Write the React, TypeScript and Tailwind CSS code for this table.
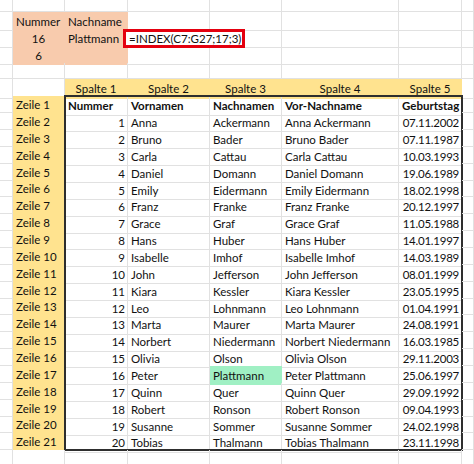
import React from 'react';

/** One Excel-style cell: its text, alignment, weight and fill. */
interface Cell {
  t?: string;
  a?: 'l' | 'r' | 'c';
  b?: boolean;
  f?: 'o' | 'y' | 'g';
  n?: boolean;
}

const PEOPLE: [string, string, string][] = [
  ['Anna', 'Ackermann', '07.11.2002'],
  ['Bruno', 'Bader', '07.11.1987'],
  ['Carla', 'Cattau', '10.03.1993'],
  ['Daniel', 'Domann', '19.06.1989'],
  ['Emily', 'Eidermann', '18.02.1998'],
  ['Franz', 'Franke', '20.12.1997'],
  ['Grace', 'Graf', '11.05.1988'],
  ['Hans', 'Huber', '14.01.1997'],
  ['Isabelle', 'Imhof', '14.03.1989'],
  ['John', 'Jefferson', '08.01.1999'],
  ['Kiara', 'Kessler', '23.05.1995'],
  ['Leo', 'Lohnmann', '01.04.1991'],
  ['Marta', 'Maurer', '24.08.1991'],
  ['Norbert', 'Niedermann', '16.03.1985'],
  ['Olivia', 'Olson', '29.11.2003'],
  ['Peter', 'Plattmann', '25.06.1997'],
  ['Quinn', 'Quer', '29.09.1992'],
  ['Robert', 'Ronson', '09.04.1993'],
  ['Susanne', 'Sommer', '24.02.1998'],
  ['Tobias', 'Thalmann', '23.11.1998'],
];

const FILL: Record<string, string> = {
  o: 'bg-[#f8cbad] border-[#f8cbad]',
  y: 'bg-[#ffe38f] border-[#ffe38f]',
  g: 'bg-[#a0f0c4] border-[#a0f0c4]',
};

const ALIGN: Record<string, string> = {
  l: 'justify-start pl-[3px]',
  r: 'justify-end pr-[2px]',
  c: 'justify-center',
};

const COLS = 'grid grid-cols-[13px_52px_63px_82px_72px_117px_63px_1fr]';

function SheetCell({ cell, className = '' }: { cell: Cell; className?: string }) {
  const fill = cell.f ? FILL[cell.f] : 'border-[#e1e1e1]';
  return (
    <div
      className={`flex min-w-0 items-center overflow-visible whitespace-nowrap border-r border-b pt-px ${fill} ${
        ALIGN[cell.a ?? 'l']
      } ${cell.b ? 'font-bold' : ''} ${cell.n ? 'tracking-[-0.25px]' : ''} ${className}`}
    >
      {cell.t}
    </div>
  );
}

function SheetRow({ cells, h = 'h-[16.87px]' }: { cells: Cell[]; h?: string }) {
  return (
    <div className={`${COLS} ${h}`}>
      {cells.map((c, i) => (
        <SheetCell key={i} cell={c} />
      ))}
    </div>
  );
}

const blank = (n: number): Cell[] => Array.from({ length: n }, () => ({}));

export default function App() {
  const header: Cell[] = [
    { t: 'Nummer', b: true },
    { t: 'Vornamen', b: true },
    { t: 'Nachnamen', b: true },
    { t: 'Vor-Nachname', b: true },
    { t: 'Geburtstag', b: true },
  ];

  const body: Cell[][] = [
    header,
    ...PEOPLE.map(([first, last, born], i): Cell[] => [
      { t: String(i + 1), a: 'r' },
      { t: first },
      { t: last, f: last === 'Plattmann' ? 'g' : undefined },
      { t: `${first} ${last}` },
      { t: born, a: 'r', n: true },
    ]),
  ];

  return (
    <div className="h-[464px] w-[474px] overflow-hidden bg-white font-['Lato',sans-serif] text-[11.5px] text-[#111]">
      <SheetRow cells={blank(8)} h="h-[12px]" />
      <SheetRow
        cells={[{}, { t: 'Nummer', f: 'o' }, { t: 'Nachname', f: 'o' }, {}, {}, {}, {}, {}]}
      />

      {/* row with the formula, framed in red */}
      <div className={`${COLS} relative z-10 h-[16.87px]`}>
        <SheetCell cell={{}} />
        <SheetCell cell={{ t: '16', f: 'o', a: 'c' }} />
        <SheetCell cell={{ t: 'Plattmann', f: 'o' }} />
        <div className="relative border-b border-[#e1e1e1]">
          <div className="absolute top-0 -left-[5px] z-10 flex h-[19px] w-[122px] items-center border-[3px] border-[#e4000f] bg-white pt-px pl-[3px] whitespace-nowrap">
            =INDEX(C7:G27;17;3)
          </div>
        </div>
        <SheetCell cell={{}} />
        <SheetCell cell={{}} />
        <SheetCell cell={{}} />
        <SheetCell cell={{}} />
      </div>

      <SheetRow cells={[{}, { t: '6', f: 'o', a: 'c' }, { f: 'o' }, {}, {}, {}, {}, {}]} />
      <SheetRow cells={blank(8)} />
      <SheetRow
        cells={[
          {},
          {},
          { t: 'Spalte 1', f: 'y', a: 'c' },
          { t: 'Spalte 2', f: 'y', a: 'c' },
          { t: 'Spalte 3', f: 'y', a: 'c' },
          { t: 'Spalte 4', f: 'y', a: 'c' },
          { t: 'Spalte 5', f: 'y', a: 'c' },
          {},
        ]}
      />

      <div className="flex">
        <div className="flex w-[13px] flex-col">
          {body.map((_, i) => (
            <SheetCell key={i} cell={{}} className="h-[16.87px]" />
          ))}
        </div>
        <div className="flex w-[52px] flex-col">
          {body.map((_, i) => (
            <SheetCell key={i} cell={{ t: `Zeile ${i + 1}`, f: 'y' }} className="h-[16.87px]" />
          ))}
        </div>
        <div className="w-[397px] outline-2 -outline-offset-1 outline-[#2e2e2e]">
          {body.map((row, i) => (
            <div key={i} className="grid h-[16.87px] grid-cols-[63px_82px_72px_117px_63px]">
              {row.map((c, j) => (
                <SheetCell key={j} cell={c} />
              ))}
            </div>
          ))}
        </div>
        <div className="flex flex-1 flex-col">
          {body.map((_, i) => (
            <SheetCell key={i} cell={{}} className="h-[16.87px]" />
          ))}
        </div>
      </div>

      <SheetRow cells={blank(8)} h="h-[20px]" />
    </div>
  );
}
